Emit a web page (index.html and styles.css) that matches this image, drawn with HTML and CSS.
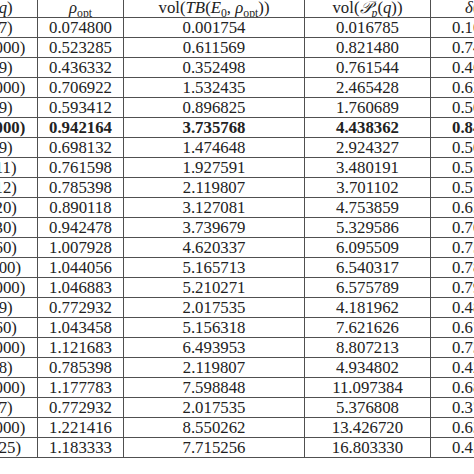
FILE: index.html
```html
<!DOCTYPE html>
<html>
<head>
<meta charset="utf-8">
<link rel="stylesheet" href="styles.css">
</head>
<body>
<table class="t">
<colgroup><col class="c1"><col class="c2"><col class="c3"><col class="c4"><col class="c5"></colgroup>
<thead>
<tr><th>(<i>p</i>, <i>q</i>)</th><th><i>ρ</i><sub>opt</sub></th><th>vol(<i>TB</i>(<i>E</i><sub>0</sub>, <i>ρ</i><sub>opt</sub>))</th><th>vol(<i class="cal">𝒫</i><sub><i>p</i></sub>(<i>q</i>))</th><th><i>δ</i>(<i class="cal">𝒫</i><sub><i>p</i></sub>)</th></tr>
</thead>
<tbody>
<tr><td>(3, 7)</td><td>0.074800</td><td>0.001754</td><td>0.016785</td><td>0.104502</td></tr>
<tr><td>(3, 1000)</td><td>0.523285</td><td>0.611569</td><td>0.821480</td><td>0.744480</td></tr>
<tr><td>(4, 9)</td><td>0.436332</td><td>0.352498</td><td>0.761544</td><td>0.462880</td></tr>
<tr><td>(4, 1000)</td><td>0.706922</td><td>1.532435</td><td>2.465428</td><td>0.621563</td></tr>
<tr><td>(5, 9)</td><td>0.593412</td><td>0.896825</td><td>1.760689</td><td>0.509359</td></tr>
<tr class="b"><td>(5, 1000)</td><td>0.942164</td><td>3.735768</td><td>4.438362</td><td>0.841702</td></tr>
<tr><td>(6, 9)</td><td>0.698132</td><td>1.474648</td><td>2.924327</td><td>0.504268</td></tr>
<tr><td>(6, 11)</td><td>0.761598</td><td>1.927591</td><td>3.480191</td><td>0.553876</td></tr>
<tr><td>(6, 12)</td><td>0.785398</td><td>2.119807</td><td>3.701102</td><td>0.572724</td></tr>
<tr><td>(6, 20)</td><td>0.890118</td><td>3.127081</td><td>4.753859</td><td>0.657818</td></tr>
<tr><td>(6, 30)</td><td>0.942478</td><td>3.739679</td><td>5.329586</td><td>0.701682</td></tr>
<tr><td>(6, 60)</td><td>1.007928</td><td>4.620337</td><td>6.095509</td><td>0.757998</td></tr>
<tr><td>(6, 200)</td><td>1.044056</td><td>5.165713</td><td>6.540317</td><td>0.789829</td></tr>
<tr><td>(6, 1000)</td><td>1.046883</td><td>5.210271</td><td>6.575789</td><td>0.792342</td></tr>
<tr><td>(7, 9)</td><td>0.772932</td><td>2.017535</td><td>4.181962</td><td>0.482439</td></tr>
<tr><td>(7, 60)</td><td>1.043458</td><td>5.156318</td><td>7.621626</td><td>0.676540</td></tr>
<tr><td>(7, 1000)</td><td>1.121683</td><td>6.493953</td><td>8.807213</td><td>0.737342</td></tr>
<tr><td>(8, 8)</td><td>0.785398</td><td>2.119807</td><td>4.934802</td><td>0.429560</td></tr>
<tr><td>(8, 1000)</td><td>1.177783</td><td>7.598848</td><td>11.097384</td><td>0.684741</td></tr>
<tr><td>(9, 7)</td><td>0.772932</td><td>2.017535</td><td>5.376808</td><td>0.375229</td></tr>
<tr><td>(9, 1000)</td><td>1.221416</td><td>8.550262</td><td>13.426720</td><td>0.636808</td></tr>
<tr><td>(10, 25)</td><td>1.183333</td><td>7.715256</td><td>16.803330</td><td>0.459153</td></tr>
</tbody>
</table>
</body>
</html>
```

FILE: styles.css
```css
html, body {
  margin: 0;
  padding: 0;
  background: #ffffff;
}

body {
  width: 474px;
  height: 474px;
  overflow: hidden;
}

.t {
  border-collapse: collapse;
  table-layout: fixed;
  width: 585px;
  margin: -3px 0 0 -49px;
  font-family: "Liberation Serif", "DejaVu Serif", serif;
  font-size: 16.8px;
  color: #222222;
}

.c1 { width: 86px; }
.c2 { width: 86px; }
.c3 { width: 181px; }
.c4 { width: 126px; }
.c5 { width: 106px; }

.t th,
.t td {
  border: 1px solid #505050;
  padding: 0;
  height: 19px;
  line-height: 19px;
  text-align: center;
  white-space: nowrap;
  font-weight: normal;
  overflow: hidden;
}

.t sub {
  font-size: 0.7em;
  line-height: 0;
  vertical-align: -0.3em;
}

.t .cal {
  font-family: "DejaVu Serif", serif;
}

.t .b td {
  font-weight: bold;
}
```
